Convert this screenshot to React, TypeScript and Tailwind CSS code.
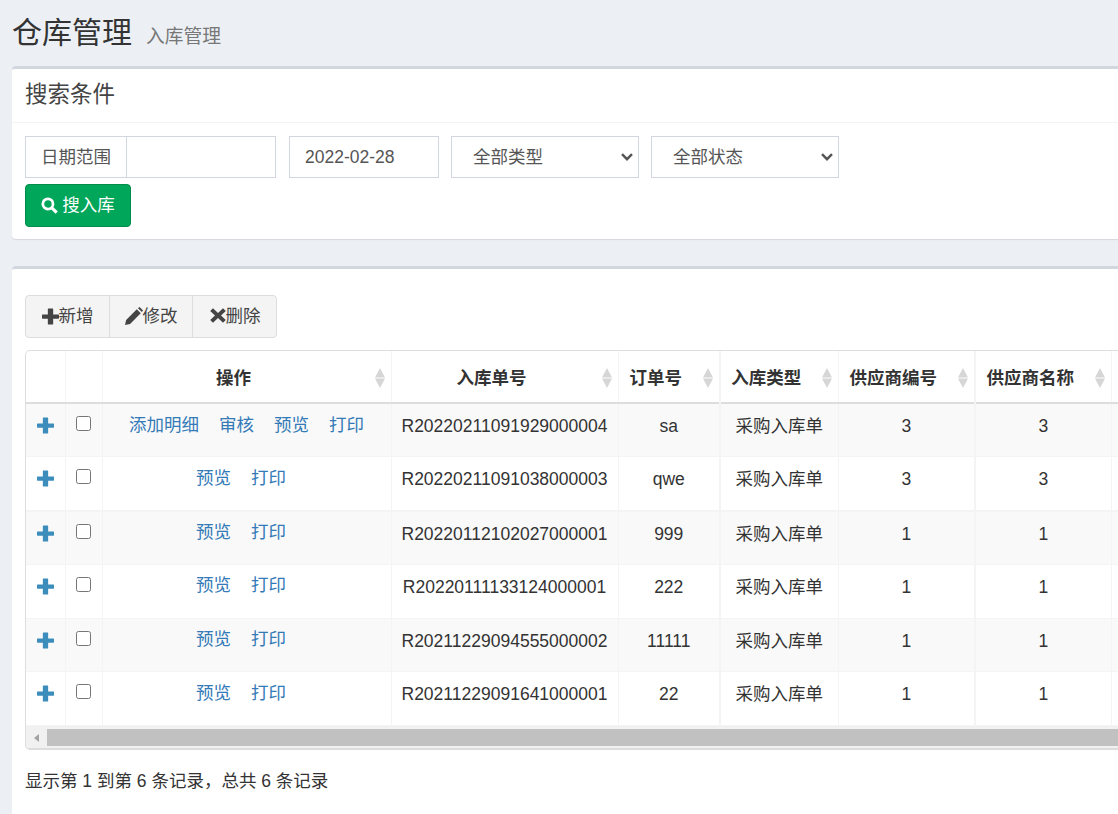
const font = { fontFamily: '"Liberation Sans", "Noto Sans CJK SC", sans-serif' };

const rows = [
  { actions: ["添加明细", "审核", "预览", "打印"], no: "R20220211091929000004", order: "sa", code: "3", name: "3" },
  { actions: ["预览", "打印"], no: "R20220211091038000003", order: "qwe", code: "3", name: "3" },
  { actions: ["预览", "打印"], no: "R20220112102027000001", order: "999", code: "1", name: "1" },
  { actions: ["预览", "打印"], no: "R20220111133124000001", order: "222", code: "1", name: "1" },
  { actions: ["预览", "打印"], no: "R20211229094555000002", order: "11111", code: "1", name: "1" },
  { actions: ["预览", "打印"], no: "R20211229091641000001", order: "22", code: "1", name: "1" },
];

const headers = ["操作", "入库单号", "订单号", "入库类型", "供应商编号", "供应商名称"];

function PlusIcon({ className }: { className?: string }) {
  return (
    <svg viewBox="0 0 16 16" className={className} fill="currentColor">
      <path d="M6 0.5h4a.5.5 0 0 1 .5.5v5h5a.5.5 0 0 1 .5.5v3a.5.5 0 0 1-.5.5h-5v5a.5.5 0 0 1-.5.5H6a.5.5 0 0 1-.5-.5v-5h-5a.5.5 0 0 1-.5-.5v-3A.5.5 0 0 1 .5 6h5V1A.5.5 0 0 1 6 .5z" />
    </svg>
  );
}

function PencilIcon() {
  return (
    <svg viewBox="0 0 16 16" className="w-[18px] h-[18px] -mt-[2px]" fill="currentColor">
      <path d="M1 11.5 10.5 2l3.5 3.5L4.5 15 0 16z" />
      <path d="M11.5 1 13 0l3 3-1 1.5z" />
    </svg>
  );
}

function RemoveIcon() {
  return (
    <svg viewBox="0 0 16 16" className="w-[16px] h-[16px] -mt-[3px] ml-[1px]" fill="currentColor">
      <path d="M3 1.2 8 6l5-4.8L15.8 4 11 8.5l4.8 4.5-2.8 2.8-5-4.8-5 4.8L.2 13 5 8.5.2 4z" />
    </svg>
  );
}

function SearchIcon() {
  return (
    <svg viewBox="0 0 16 16" className="w-[17px] h-[17px]" fill="none" stroke="currentColor">
      <circle cx="6.5" cy="6.5" r="4.8" strokeWidth="2.6" />
      <path d="m10.2 10.2 4.6 4.6" strokeWidth="3" />
    </svg>
  );
}

function SortIcon() {
  return (
    <svg viewBox="0 0 10 20" className="w-[10px] h-[20px] absolute right-[6px] top-[17px]" fill="#d6d6d6">
      <path d="M5 0l5 9.4H0z" />
      <path d="M5 20l5-9.4H0z" />
    </svg>
  );
}

function Select({ label }: { label: string }) {
  return (
    <div className="relative w-[188px] h-[42px]">
      <select className="appearance-none w-full h-full border border-[#d2d6de] px-[21px] bg-white text-[#555]">
        <option>{label}</option>
      </select>
      <svg viewBox="0 0 12 8" className="w-[12px] h-[8px] absolute right-[6px] top-[17px] pointer-events-none" fill="none" stroke="#555" strokeWidth="2.4">
        <path d="M1 1.2 6 6.2l5-5" />
      </svg>
    </div>
  );
}

export default function App() {
  return (
    <div className="h-[814px] overflow-hidden bg-[#ecf0f5] text-[17.5px] leading-[25px] text-[#333] pl-3" style={font}>
      <div className="h-[66px] flex items-baseline pt-[15px]">
        <h1 className="text-[30px] leading-[36px] text-[#333]">仓库管理</h1>
        <small className="text-[18.75px] text-[#777] ml-[14px]">入库管理</small>
      </div>

      <div className="w-[1300px] bg-white border-t-[3px] border-[#d2d6de] rounded-[4px] shadow-[0_1px_1px_rgba(0,0,0,0.1)]">
        <div className="h-[54px] flex items-center px-[13px] pb-[2px] border-b border-[#f4f4f4]">
          <h3 className="text-[22.5px] text-[#444]">搜索条件</h3>
        </div>
        <div className="px-[13px] pt-[13px] pb-[12px]">
          <div className="flex">
            <div className="flex h-[42px] w-[251px] border border-[#d2d6de]">
              <span className="w-[101px] border-r border-[#d2d6de] flex items-center justify-center text-[#555]">日期范围</span>
              <input className="flex-1 min-w-0 px-4 bg-white" />
            </div>
            <input defaultValue="2022-02-28" className="ml-[13px] mr-[12px] h-[42px] w-[150px] border border-[#d2d6de] px-[15px] text-[#555]" />
            <Select label="全部类型" />
            <div className="ml-[12px]">
              <Select label="全部状态" />
            </div>
          </div>
          <button className="mt-[6px] h-[43px] w-[106px] flex items-center justify-center gap-[4px] bg-[#00a65a] border border-[#008d4c] rounded-[4px] text-white">
            <SearchIcon />
            搜入库
          </button>
        </div>
      </div>

      <div className="mt-[27px] w-[1300px] h-[600px] bg-white border-t-[3px] border-[#d2d6de] rounded-[4px] px-[13px] pt-[26px]">
        <div className="flex w-[252px] h-[43px] bg-[#f4f4f4] border border-[#ddd] rounded-[4px] text-[#444]">
          <button className="w-[84px] flex items-center justify-center border-r border-[#ddd]">
            <PlusIcon className="w-[17px] h-[17px] -mt-[1px]" />
            新增
          </button>
          <button className="w-[83px] flex items-center justify-center border-r border-[#ddd]">
            <PencilIcon />
            修改
          </button>
          <button className="flex-1 flex items-center justify-center">
            <RemoveIcon />
            删除
          </button>
        </div>

        <div className="mt-[12px] w-[1200px] border border-[#ddd] border-b-2 rounded-[5px] overflow-hidden">
          <table className="border-collapse table-fixed w-[1200px] text-center">
            <colgroup>
              <col className="w-[39px]" />
              <col className="w-[37px]" />
              <col className="w-[289px]" />
              <col className="w-[227px]" />
              <col className="w-[102px]" />
              <col className="w-[118px]" />
              <col className="w-[137px]" />
              <col className="w-[136px]" />
              <col />
            </colgroup>
            <thead>
              <tr className="h-[52px] border-b-2 border-[#ddd]">
                <th className="border-r border-[#f4f4f4]"></th>
                <th className="border-r border-[#f4f4f4]"></th>
                {headers.map((h) => (
                  <th key={h} className={`relative pr-[26px] pt-[3px] border-[#f4f4f4] font-bold text-[#333] ${h === "订单号" || h === "供应商编号" ? "border-r-2" : "border-r"}`}>
                    {h}
                    <SortIcon />
                  </th>
                ))}
                <th></th>
              </tr>
            </thead>
            <tbody>
              {rows.map((r, i) => (
                <tr key={r.no} className={`h-[53.8px] border-[#f4f4f4] ${i === 1 ? "border-b-2" : "border-b"} ${i % 2 === 0 ? "bg-[#f9f9f9]" : "bg-white"}`}>
                  <td className="align-top pt-[13px] border-r border-[#f4f4f4] text-[#3c8dbc]">
                    <PlusIcon className="w-[17px] h-[17px] mx-auto" />
                  </td>
                  <td className="align-top pt-[12px] border-r border-[#f4f4f4]">
                    <input type="checkbox" className="w-[15px] h-[15px] block mx-auto" />
                  </td>
                  <td className="align-top pt-[8.5px] border-r border-[#f4f4f4]">
                    <div className={`flex justify-center gap-5 text-[#337ab7] ${r.actions.length === 2 ? "pr-[11px]" : ""}`}>
                      {r.actions.map((a) => (
                        <a key={a}>{a}</a>
                      ))}
                    </div>
                  </td>
                  <td className="align-top pt-[10px] border-r border-[#f4f4f4]">{r.no}</td>
                  <td className="align-top pt-[10px] border-r-2 border-[#f4f4f4]">{r.order}</td>
                  <td className="align-top pt-[10px] border-r border-[#f4f4f4]">采购入库单</td>
                  <td className="align-top pt-[10px] border-r-2 border-[#f4f4f4]">{r.code}</td>
                  <td className="align-top pt-[10px] border-r border-[#f4f4f4]">{r.name}</td>
                  <td></td>
                </tr>
              ))}
            </tbody>
          </table>
          <div className="h-[22px] flex bg-[#f1f1f1] pt-[3px]">
            <div className="w-[21px] h-[17px] flex items-center justify-center">
              <div className="w-0 h-0 border-y-[4px] border-y-transparent border-r-[5px] border-r-[#a3a3a3]"></div>
            </div>
            <div className="flex-1 h-[17px] bg-[#c1c1c1]"></div>
          </div>
        </div>

        <p className="mt-[19px] text-[#333]">显示第 1 到第 6 条记录，总共 6 条记录</p>
      </div>
    </div>
  );
}
